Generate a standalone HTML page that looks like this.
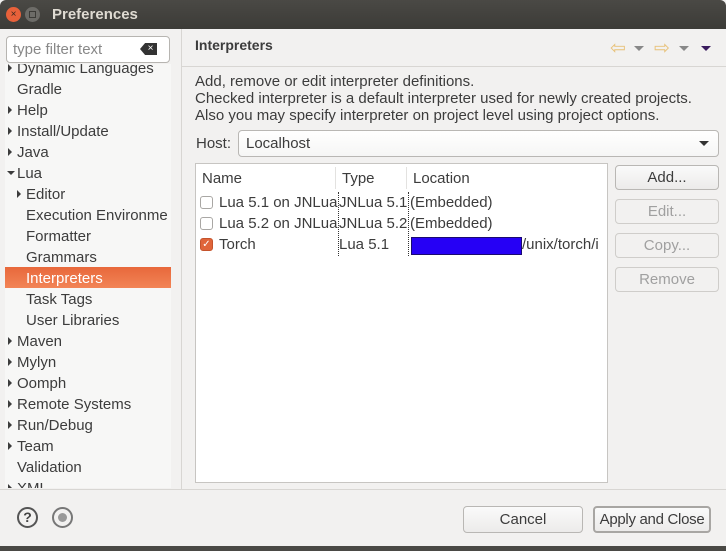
<!DOCTYPE html>
<html><head><style>
*{box-sizing:border-box;margin:0;padding:0}
body{width:726px;height:551px;overflow:hidden;background:#f2f1f0;font-family:"Liberation Sans",sans-serif;font-size:15px;color:#3c3c3c;position:relative}
.a{position:absolute;white-space:nowrap}
#title{left:0;top:0;width:726px;height:29px;background:linear-gradient(#4a4945,#3c3b37);border-radius:6px 6px 0 0}
.tree{left:5px;top:64px;width:166px;height:424px;background:#f7f7f6;overflow:hidden}
.ti{position:absolute;left:0;width:166px;height:21px;line-height:23px}
.tri{position:absolute;width:0;height:0;border-top:4px solid transparent;border-bottom:4px solid transparent;border-left:4px solid #3c3c3c;top:7px}
.btn{position:absolute;background:linear-gradient(#fafafa,#ecebea);border:1px solid #b9b7b4;border-radius:4px;text-align:center;line-height:24px}
.dis{color:#a0a0a0;border-color:#cfcdca;background:#f2f1f0}
.cb{position:absolute;width:13px;height:13px;border:1px solid #a9a7a4;border-radius:3px;background:#fff;left:5px}
</style></head><body>
<div class="a" id="title"></div>
<div class="a" style="left:6px;top:7px;width:15px;height:15px;border-radius:50%;background:#e8613a;color:#3c2a20;font-size:10px;text-align:center;line-height:15px">×</div>
<div class="a" style="left:25px;top:7px;width:15px;height:15px;border-radius:50%;background:#6d6c68"><div style="margin:4px;width:7px;height:7px;border:1px solid #3c3b37"></div></div>
<div class="a" style="left:52px;top:6px;color:#dfdbd2;font-weight:bold;font-size:15px">Preferences</div>

<div class="a" style="left:6px;top:36px;width:164px;height:27px;background:#fff;border:1px solid #b7b5b1;border-radius:4px"></div>
<div class="a" style="left:13px;top:41px;color:#888;font-size:15px">type filter text</div>
<div class="a" style="left:140px;top:43px;width:17px;height:12px;background:#333;clip-path:polygon(30% 0,100% 0,100% 100%,30% 100%,0 50%);color:#fff;font-size:10px;text-align:center;line-height:12px;padding-left:4px">×</div>

<div class="a tree">
<div class="ti" style="top:-7px"><span class="tri" style="left:3px"></span><span style="padding-left:12px">Dynamic Languages</span></div>
<div class="ti" style="top:14px;padding-left:12px">Gradle</div>
<div class="ti" style="top:35px"><span class="tri" style="left:3px"></span><span style="padding-left:12px">Help</span></div>
<div class="ti" style="top:56px"><span class="tri" style="left:3px"></span><span style="padding-left:12px">Install/Update</span></div>
<div class="ti" style="top:77px"><span class="tri" style="left:3px"></span><span style="padding-left:12px">Java</span></div>
<div class="ti" style="top:98px"><span class="tri" style="left:2px;border-left:4px solid transparent;border-right:4px solid transparent;border-top:4px solid #3c3c3c;border-bottom:0;top:9px"></span><span style="padding-left:12px">Lua</span></div>
<div class="ti" style="top:119px"><span class="tri" style="left:12px"></span><span style="padding-left:21px">Editor</span></div>
<div class="ti" style="top:140px;padding-left:21px">Execution Environme</div>
<div class="ti" style="top:161px;padding-left:21px">Formatter</div>
<div class="ti" style="top:182px;padding-left:21px">Grammars</div>
<div class="ti" style="top:203px;padding-left:21px;background:linear-gradient(#e8683b,#f28456);color:#fff">Interpreters</div>
<div class="ti" style="top:224px;padding-left:21px">Task Tags</div>
<div class="ti" style="top:245px;padding-left:21px">User Libraries</div>
<div class="ti" style="top:266px"><span class="tri" style="left:3px"></span><span style="padding-left:12px">Maven</span></div>
<div class="ti" style="top:287px"><span class="tri" style="left:3px"></span><span style="padding-left:12px">Mylyn</span></div>
<div class="ti" style="top:308px"><span class="tri" style="left:3px"></span><span style="padding-left:12px">Oomph</span></div>
<div class="ti" style="top:329px"><span class="tri" style="left:3px"></span><span style="padding-left:12px">Remote Systems</span></div>
<div class="ti" style="top:350px"><span class="tri" style="left:3px"></span><span style="padding-left:12px">Run/Debug</span></div>
<div class="ti" style="top:371px"><span class="tri" style="left:3px"></span><span style="padding-left:12px">Team</span></div>
<div class="ti" style="top:392px;padding-left:12px">Validation</div>
<div class="ti" style="top:413px"><span class="tri" style="left:3px"></span><span style="padding-left:12px">XML</span></div>
</div>
<div class="a" style="left:181px;top:29px;width:1px;height:460px;background:#d8d6d3"></div>

<div class="a" style="left:195px;top:37px;font-weight:bold;font-size:14px">Interpreters</div>
<div class="a" style="left:610px;top:37px;color:#e8c27a;font-size:19px">⇦</div>
<div class="a" style="left:634px;top:46px;border-left:5px solid transparent;border-right:5px solid transparent;border-top:5px solid #888"></div>
<div class="a" style="left:654px;top:37px;color:#e8c27a;font-size:19px">⇨</div>
<div class="a" style="left:679px;top:46px;border-left:5px solid transparent;border-right:5px solid transparent;border-top:5px solid #888"></div>
<div class="a" style="left:701px;top:46px;border-left:5px solid transparent;border-right:5px solid transparent;border-top:5px solid #3a1c5e"></div>
<div class="a" style="left:182px;top:66px;width:544px;height:1px;background:#d8d6d3"></div>

<div class="a" style="left:195px;top:73px;line-height:17px">Add, remove or edit interpreter definitions.<br>Checked interpreter is a default interpreter used for newly created projects.<br>Also you may specify interpreter on project level using project options.</div>
<div class="a" style="left:196px;top:135px">Host:</div>
<div class="a" style="left:238px;top:130px;width:481px;height:27px;background:linear-gradient(#fff,#f6f6f5);border:1px solid #b9b7b4;border-radius:4px"></div>
<div class="a" style="left:246px;top:135px">Localhost</div>
<div class="a" style="left:699px;top:141px;border-left:5px solid transparent;border-right:5px solid transparent;border-top:5px solid #333"></div>

<div class="a" style="left:195px;top:163px;width:413px;height:320px;background:#fff;border:1px solid #c7c5c2"></div>
<div class="a" style="left:202px;top:170px">Name</div>
<div class="a" style="left:342px;top:170px">Type</div>
<div class="a" style="left:413px;top:170px">Location</div>
<div class="a" style="left:335px;top:167px;width:1px;height:22px;background:#e3e2e0"></div>
<div class="a" style="left:406px;top:167px;width:1px;height:22px;background:#e3e2e0"></div>
<div class="a" style="left:338px;top:192px;height:64px;border-left:1px dotted #333"></div>
<div class="a" style="left:408px;top:192px;height:64px;border-left:1px dotted #333"></div>
<div class="cb" style="left:200px;top:196px"></div><div class="a" style="left:219px;top:194px;width:119px;overflow:hidden">Lua 5.1 on JNLua</div>
<div class="cb" style="left:200px;top:217px"></div><div class="a" style="left:219px;top:215px;width:119px;overflow:hidden">Lua 5.2 on JNLua</div>
<div class="cb" style="left:200px;top:238px;background:#e0653a;border-color:#c5532c;color:#fff;font-size:10px;line-height:11px;text-align:center">✓</div><div class="a" style="left:219px;top:236px">Torch</div>
<div class="a" style="left:339px;top:194px;width:69px;overflow:hidden">JNLua 5.1</div>
<div class="a" style="left:339px;top:215px;width:69px;overflow:hidden">JNLua 5.2</div>
<div class="a" style="left:339px;top:236px">Lua 5.1</div>
<div class="a" style="left:410px;top:194px">(Embedded)</div>
<div class="a" style="left:410px;top:215px">(Embedded)</div>
<div class="a" style="left:411px;top:237px;width:111px;height:18px;background:#2600f5;border:1px solid #1a0a70"></div>
<div class="a" style="left:522px;top:236px;width:84px;overflow:hidden">/unix/torch/i</div>

<div class="btn" style="left:615px;top:165px;width:104px;height:25px">Add...</div>
<div class="btn dis" style="left:615px;top:199px;width:104px;height:25px">Edit...</div>
<div class="btn dis" style="left:615px;top:233px;width:104px;height:25px">Copy...</div>
<div class="btn dis" style="left:615px;top:267px;width:104px;height:25px">Remove</div>

<div class="a" style="left:0;top:489px;width:726px;height:1px;background:#d8d6d3"></div>
<div class="a" style="left:17px;top:507px;width:21px;height:21px;border:2px solid #555;border-radius:50%;text-align:center;font-weight:bold;font-size:14px;line-height:17px;color:#444">?</div>
<div class="a" style="left:52px;top:507px;width:21px;height:21px;border:2px solid #777;border-radius:50%"><div style="margin:4px;width:9px;height:9px;border-radius:50%;background:#999"></div></div>
<div class="btn" style="left:463px;top:506px;width:120px;height:27px;line-height:26px">Cancel</div>
<div class="btn" style="left:593px;top:506px;width:118px;height:27px;line-height:24px;border:2px solid #a8a6a3;letter-spacing:-0.3px">Apply and Close</div>
<div class="a" style="left:0;top:546px;width:726px;height:5px;background:#4a4945"></div>
</body></html>
